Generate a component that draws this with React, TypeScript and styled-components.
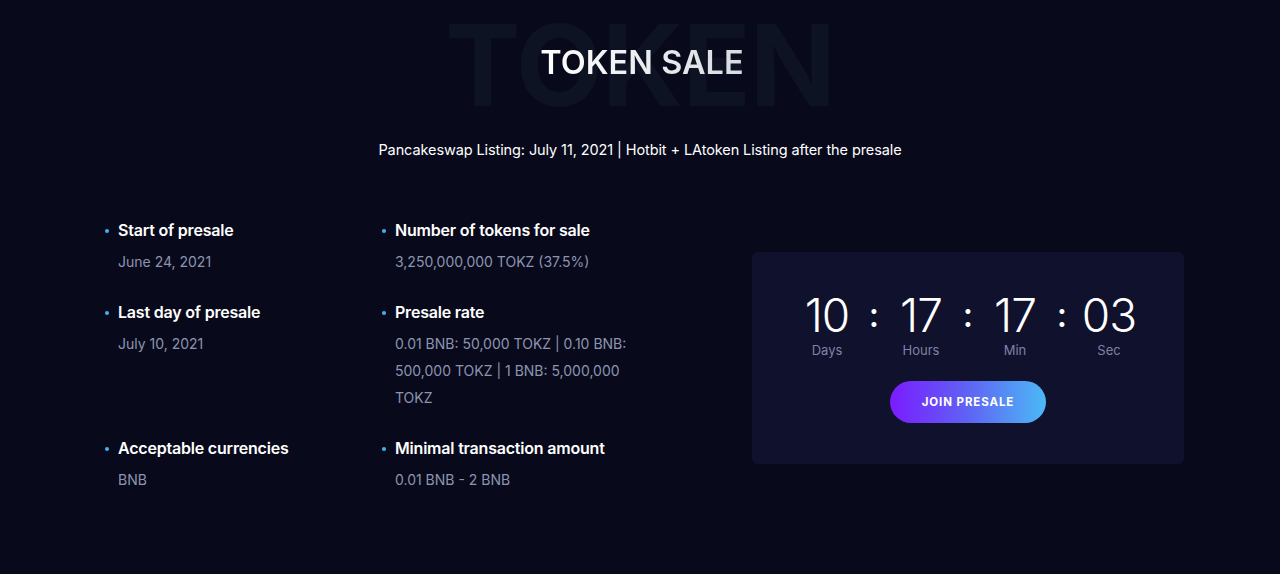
import React from "react";
import styled, { createGlobalStyle } from "styled-components";

const Global = createGlobalStyle`
  html, body { margin: 0; padding: 0; background: #080a1b; }
  body { font-family: "Inter", "Noto Sans", sans-serif; color: #fff; }
  * { box-sizing: border-box; }
`;

const Page = styled.section`
  width: 1280px;
  height: 574px;
  background: #080a1b;
  overflow: hidden;
`;

const Heading = styled.div`
  position: relative;
  height: 130px;
  display: flex;
  justify-content: center;
  align-items: flex-start;
`;

const Watermark = styled.div`
  position: absolute;
  top: 9px;
  left: 0;
  right: 0;
  text-align: center;
  font-size: 113px;
  line-height: 113px;
  font-weight: 700;
  color: #0e1323;
  letter-spacing: -1px;
  user-select: none;
  pointer-events: none;
`;

const Title = styled.h2`
  position: relative;
  margin: 45px 0 0 4px;
  font-size: 32.5px;
  line-height: 36px;
  font-weight: 600;
  background: linear-gradient(90deg, #ffffff 0%, #d9dbe3 100%);
  -webkit-background-clip: text;
  background-clip: text;
  color: transparent;
`;

const Subtitle = styled.p`
  margin: 9px 0 0;
  text-align: center;
  font-size: 14.5px;
  line-height: 22px;
  color: #ffffff;
  letter-spacing: -0.1px;
`;

const Body = styled.div`
  display: grid;
  grid-template-columns: 277px 373px 432px;
  margin: 57px 0 0 102px;
  align-items: center;
`;

const Info = styled.div`
  grid-column: 1 / span 2;
  display: grid;
  grid-template-columns: 277px 373px;
`;

const Item = styled.div`
  display: flex;
  flex-direction: column;
  padding-left: 16px;
  position: relative;
  margin-bottom: 25px;
`;

const Bullet = styled.span`
  position: absolute;
  left: 3px;
  top: 11px;
  width: 4px;
  height: 4px;
  border-radius: 50%;
  background: #3fb4f3;
`;

const ItemTitle = styled.div`
  font-size: 16px;
  line-height: 24px;
  font-weight: 600;
  color: #ffffff;
  letter-spacing: -0.2px;
`;

const ItemValue = styled.div<{ $w?: number }>`
  margin-top: 6px;
  font-size: 14px;
  line-height: 27px;
  color: #8d94b1;
  max-width: ${(p) => (p.$w ? `${p.$w}px` : "none")};
`;

const Card = styled.div`
  grid-column: 3;
  background: #10112c;
  border-radius: 6px;
  padding: 40px 0 41px;
  display: flex;
  flex-direction: column;
  align-items: center;
  margin-top: -20px;
`;

const Timer = styled.div`
  display: grid;
  grid-template-columns: 60px 34px 60px 34px 60px 34px 60px;
`;

const Unit = styled.div`
  display: flex;
  flex-direction: column;
  align-items: center;
`;

const Num = styled.div`
  font-size: 46px;
  line-height: 46px;
  font-weight: 300;
  color: #ffffff;
  letter-spacing: -1px;
`;

const Label = styled.div`
  margin-top: 3px;
  font-size: 13px;
  line-height: 18px;
  color: #7f82a6;
`;

const Colon = styled.div`
  text-align: center;
  font-size: 34px;
  line-height: 46px;
  font-weight: 500;
  color: #ffffff;
`;

const Button = styled.button`
  margin-top: 22px;
  width: 156px;
  height: 42px;
  border: none;
  border-radius: 21px;
  background: linear-gradient(90deg, #7a1cff 0%, #5f63f4 50%, #4bbaf5 100%);
  color: #ffffff;
  font-family: inherit;
  font-size: 11.5px;
  font-weight: 700;
  letter-spacing: 0.9px;
  cursor: pointer;
`;

const items = [
  { t: "Start of presale", v: "June 24, 2021" },
  { t: "Number of tokens for sale", v: "3,250,000,000 TOKZ (37.5%)" },
  { t: "Last day of presale", v: "July 10, 2021" },
  { t: "Presale rate", v: "0.01 BNB: 50,000 TOKZ | 0.10 BNB: 500,000 TOKZ | 1 BNB: 5,000,000 TOKZ", w: 236 },
  { t: "Acceptable currencies", v: "BNB" },
  { t: "Minimal transaction amount", v: "0.01 BNB - 2 BNB" },
];

const units = [
  { n: "10", l: "Days" },
  { n: "17", l: "Hours" },
  { n: "17", l: "Min" },
  { n: "03", l: "Sec" },
];

export default function App() {
  return (
    <Page>
      <Global />
      <Heading>
        <Watermark aria-hidden="true">TOKEN</Watermark>
        <Title>TOKEN SALE</Title>
      </Heading>
      <Subtitle>Pancakeswap Listing: July 11, 2021 | Hotbit + LAtoken Listing after the presale</Subtitle>
      <Body>
        <Info>
          {items.map((it) => (
            <Item key={it.t}>
              <Bullet />
              <ItemTitle>{it.t}</ItemTitle>
              <ItemValue $w={it.w}>{it.v}</ItemValue>
            </Item>
          ))}
        </Info>
        <Card>
          <Timer>
            {units.map((u, i) => (
              <React.Fragment key={u.l}>
                {i > 0 && <Colon>:</Colon>}
                <Unit>
                  <Num>{u.n}</Num>
                  <Label>{u.l}</Label>
                </Unit>
              </React.Fragment>
            ))}
          </Timer>
          <Button>JOIN PRESALE</Button>
        </Card>
      </Body>
    </Page>
  );
}
